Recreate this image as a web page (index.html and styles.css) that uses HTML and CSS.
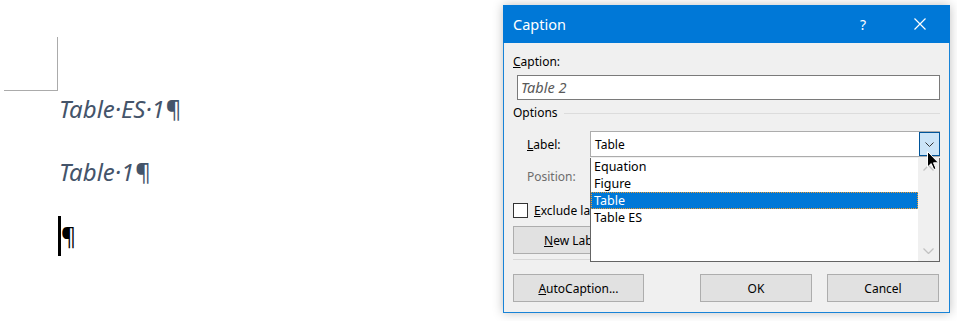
FILE: index.html
```html
<!DOCTYPE html>
<html lang="en">
<head>
    <meta charset="UTF-8">
    <title>Caption dialog</title>
    <link rel="stylesheet" href="styles.css">
</head>
<body>
    <div class="desktop">
        <div class="doc">
            <div class="corner"></div>
            <p class="cap-line first">Table·ES·1¶</p>
            <p class="cap-line">Table·1¶</p>
            <p class="empty-line"><span class="caret"></span>¶</p>
        </div>

        <div class="dialog">
            <div class="titlebar">
                <span class="title">Caption</span>
                <span class="help">?</span>
                <svg class="close" width="12" height="12" viewBox="0 0 12 12">
                    <path d="M0.5 0.5 L11.5 11.5 M11.5 0.5 L0.5 11.5" stroke="#fff" stroke-width="1.2"/>
                </svg>
            </div>

            <div class="dlg-body">
                <div class="field-label"><u>C</u>aption:</div>
                <div class="text-input">Table 2</div>

                <div class="group-head">
                    <span>Options</span>
                    <span class="rule"></span>
                </div>

                <div class="opt-row">
                    <span class="opt-label"><u>L</u>abel:</span>
                    <div class="combo">
                        <span>Table</span>
                        <span class="combo-btn">
                            <svg width="9" height="5" viewBox="0 0 9 5">
                                <path d="M0.5 0.5 L4.5 4.5 L8.5 0.5" fill="none" stroke="#333" stroke-width="1"/>
                            </svg>
                        </span>
                    </div>
                </div>

                <div class="opt-row disabled">
                    <span class="opt-label">Position:</span>
                </div>

                <!-- the open list covers the right part of these two rows -->
                <div class="check-row">
                    <span class="checkbox"></span>
                    <span class="clip"><u>E</u>xclude la</span>
                </div>

                <div class="btn-row upper">
                    <button class="btn wide cut"><span><u>N</u>ew Lab</span></button>
                </div>

                <div class="sep"></div>

                <div class="btn-row lower">
                    <button class="btn wide"><u>A</u>utoCaption...</button>
                    <span class="spacer"></span>
                    <button class="btn">OK</button>
                    <button class="btn">Cancel</button>
                </div>
            </div>

            <div class="dropdown">
                <div class="items">
                    <div class="item">Equation</div>
                    <div class="item">Figure</div>
                    <div class="item selected">Table</div>
                    <div class="item">Table ES</div>
                </div>
                <div class="scrollbar">
                    <svg width="11" height="6" viewBox="0 0 11 6">
                        <path d="M0.5 5.5 L5.5 0.5 L10.5 5.5" fill="none" stroke="#c2c2c2" stroke-width="1.3"/>
                    </svg>
                    <svg width="11" height="6" viewBox="0 0 11 6">
                        <path d="M0.5 0.5 L5.5 5.5 L10.5 0.5" fill="none" stroke="#c2c2c2" stroke-width="1.3"/>
                    </svg>
                </div>
            </div>

            <svg class="pointer" width="13" height="20" viewBox="0 0 13 20">
                <path d="M0.5 0.5 L0.5 16 L4.2 12.6 L6.8 18.6 L9 17.6 L6.5 11.8 L11.5 11.8 Z" fill="#000" stroke="#fff" stroke-width="1"/>
            </svg>
        </div>
    </div>
</body>
</html>
```

FILE: styles.css
```css
body {
    margin: 0;
    background-color: #fff;
    font-family: "Noto Sans", "Open Sans", sans-serif;
    overflow: hidden;
}

.desktop {
    display: flex;
    align-items: flex-start;
    height: 321px;
}

/* document side */
.doc {
    width: 503px;
    flex: none;
}

.corner {
    width: 53px;
    height: 53px;
    margin: 37px 0 0 4px;
    border-right: 1px solid #ababab;
    border-bottom: 1px solid #ababab;
}

.cap-line {
    margin: 0 0 0 59px;
    font-size: 24px;
    line-height: 32px;
    font-style: italic;
    color: #44546a;
}

.cap-line.first {
    margin-top: 2px;
}

.cap-line + .cap-line {
    margin-top: 31px;
}

.empty-line {
    display: flex;
    align-items: center;
    margin: 28px 0 0 58px;
    font-size: 23px;
    line-height: 40px;
    color: #000;
}

.caret {
    width: 3px;
    height: 40px;
    background-color: #000;
}

/* dialog */
.dialog {
    position: relative;
    width: 447px;
    height: 308px;
    margin-top: 5px;
    box-sizing: border-box;
    border: 1px solid #1883d7;
    border-top: none;
    background-color: #f0f0f0;
    box-shadow: 0 0 10px rgba(0, 0, 0, 0.25);
    font-size: 12px;
    color: #000;
}

.titlebar {
    display: flex;
    align-items: center;
    height: 38px;
    margin: 0 -1px;
    padding: 0 0 0 10px;
    background-color: #0078d7;
    color: #fff;
}

.title {
    font-size: 14.5px;
    flex: 1;
}

.help {
    font-size: 14px;
    width: 16px;
    margin-right: 38px;
}

.close {
    margin-right: 24px;
}

.dlg-body {
    padding: 11px 9px 0 9px;
}

.field-label {
    line-height: 16px;
}

.text-input {
    height: 25px;
    margin: 5px 0 0 4px;
    padding-left: 3px;
    box-sizing: border-box;
    border: 1px solid #7a7a7a;
    background-color: #fff;
    font-style: italic;
    font-size: 14.5px;
    line-height: 22px;
    color: #595959;
}

.group-head {
    display: flex;
    align-items: center;
    margin-top: 5px;
    line-height: 16px;
}

.group-head .rule {
    flex: 1;
    height: 1px;
    margin-left: 6px;
    background-color: #dcdcdc;
}

.opt-row {
    display: flex;
    align-items: center;
    height: 26px;
    margin-top: 10px;
    padding-left: 14px;
}

.opt-row.disabled {
    margin-top: 6px;
    color: #6d6d6d;
}

.opt-label {
    width: 63px;
}

.combo {
    flex: 1;
    display: flex;
    align-items: center;
    height: 26px;
    box-sizing: border-box;
    padding-left: 4px;
    border: 1px solid #acacac;
    background-color: #fff;
}

.combo span:first-child {
    flex: 1;
}

.combo-btn {
    display: flex;
    align-items: center;
    justify-content: center;
    width: 21px;
    height: 24px;
    margin-right: -1px;
    box-sizing: border-box;
    border: 1px solid #005499;
    background-color: #cce4f7;
}

.check-row {
    display: flex;
    align-items: center;
    margin-top: 13px;
    height: 16px;
}

.checkbox {
    width: 13px;
    height: 13px;
    margin-right: 6px;
    border: 1px solid #333;
    background-color: #fff;
}

.btn-row {
    display: flex;
    gap: 15px;
}

.btn-row.upper {
    margin-top: 8px;
}

.btn-row.lower {
    margin-top: 14px;
    margin-right: 1px;
}

.spacer {
    flex: 1;
}

.btn {
    width: 112px;
    height: 28px;
    padding: 0;
    border: 1px solid #adadad;
    background-color: #e1e1e1;
    font-family: inherit;
    font-size: 12px;
    color: #000;
}

.btn.wide {
    width: 131px;
}

/* only the left part of this button shows beside the list */
.btn.cut {
    text-align: left;
    padding-left: 30px;
}

.sep {
    height: 1px;
    margin-top: 5px;
    background-color: #d7d7d7;
}

/* open label list */
.dropdown {
    position: absolute;
    left: 86px;
    top: 153px;
    width: 350px;
    height: 104px;
    box-sizing: border-box;
    display: flex;
    border: 1px solid #646464;
    border-top: none;
    background-color: #fff;
}

.items {
    flex: 1;
}

.item {
    height: 16px;
    padding-top: 1px;
    line-height: 16px;
    padding-left: 3px;
    font-size: 12.5px;
}

.item.selected {
    background-color: #0078d7;
    color: #fff;
    outline: 1px dotted #f09c30;
    outline-offset: -1px;
}

.scrollbar {
    width: 21px;
    display: flex;
    flex-direction: column;
    justify-content: space-between;
    align-items: center;
    padding: 7px 0 7px;
    background-color: #f0f0f0;
}

.pointer {
    position: absolute;
    left: 423px;
    top: 146px;
}
```
